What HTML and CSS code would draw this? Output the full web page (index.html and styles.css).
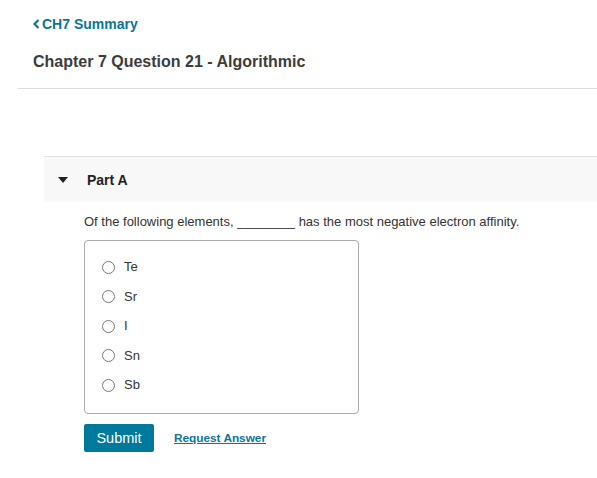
FILE: index.html
```html
<!DOCTYPE html>
<html lang="en">
<head>
    <meta charset="UTF-8">
    <title>Chapter 7 Question 21</title>
    <link rel="stylesheet" href="styles.css">
</head>
<body>
    <div class="header">
        <a href="#" class="back-link">
            <svg class="chevron" width="7" height="10" viewBox="0 0 7 10"><polyline points="5.5,1 1.5,5 5.5,9" fill="none" stroke="#0a7499" stroke-width="2.2"/></svg>CH7 Summary
        </a>
        <h1 class="title">Chapter 7 Question 21 - Algorithmic</h1>
    </div>

    <div class="part">
        <div class="part-header">
            <span class="caret"></span>
            <span class="part-title">Part A</span>
        </div>
        <div class="part-body">
            <p class="question">Of the following elements, ________ has the most negative electron affinity.</p>

            <div class="choices">
                <label class="choice"><input type="radio" name="a"> Te</label>
                <label class="choice"><input type="radio" name="a"> Sr</label>
                <label class="choice"><input type="radio" name="a"> I</label>
                <label class="choice"><input type="radio" name="a"> Sn</label>
                <label class="choice"><input type="radio" name="a"> Sb</label>
            </div>

            <div class="actions">
                <button class="submit">Submit</button>
                <a href="#" class="request">Request Answer</a>
            </div>
        </div>
    </div>
</body>
</html>
```

FILE: styles.css
```css
body {
    margin: 0;
    font-family: "Liberation Sans", Arial, sans-serif;
    color: #333;
    background-color: #fff;
}

.header {
    margin-left: 18px;
    padding: 15px 0 0 15px;
    height: 73px;
    border-bottom: 1px solid #ddd;
}

.back-link {
    display: inline-flex;
    align-items: center;
    gap: 2px;
    font-size: 14px;
    line-height: 16px;
    font-weight: bold;
    color: #0a7499;
    text-decoration: none;
}

.title {
    margin: 19px 0 0 0;
    font-size: 16px;
    line-height: 20px;
    font-weight: bold;
    color: #3c3c3c;
}

.part {
    margin: 67px 0 0 44px;
}

.part-header {
    display: flex;
    align-items: center;
    height: 45px;
    border-top: 1px solid #e2e2e2;
    background-color: #f8f8f8;
}

.caret {
    width: 0;
    height: 0;
    margin-left: 14px;
    border-left: 5px solid transparent;
    border-right: 5px solid transparent;
    border-top: 6px solid #222;
}

.part-title {
    margin-left: 19px;
    font-size: 14px;
    font-weight: bold;
    color: #222;
}

.part-body {
    padding-left: 40px;
}

.question {
    margin: 12px 0 0 0;
    font-size: 13px;
    line-height: 16px;
}

.choices {
    display: flex;
    flex-direction: column;
    gap: 13.5px;
    width: 273px;
    margin-top: 10px;
    padding: 18px 0 20px 0;
    border: 1px solid #aaa;
    border-radius: 4px;
}

.choice {
    display: flex;
    align-items: center;
    gap: 9px;
    padding-left: 17px;
    font-size: 13px;
    line-height: 16px;
}

.choice input {
    appearance: none;
    width: 13px;
    height: 13px;
    margin: 0;
    border: 1px solid #777;
    border-radius: 50%;
    background: #fff;
}

.actions {
    display: flex;
    align-items: center;
    gap: 20px;
    margin-top: 10px;
}

.submit {
    width: 70px;
    height: 28px;
    padding: 0;
    border: none;
    border-radius: 2px;
    background-color: #007a9c;
    color: #fff;
    font-family: "Liberation Sans", Arial, sans-serif;
    font-size: 14.5px;
}

.request {
    font-size: 11.8px;
    font-weight: bold;
    color: #0a7499;
    text-decoration: underline;
}
```
